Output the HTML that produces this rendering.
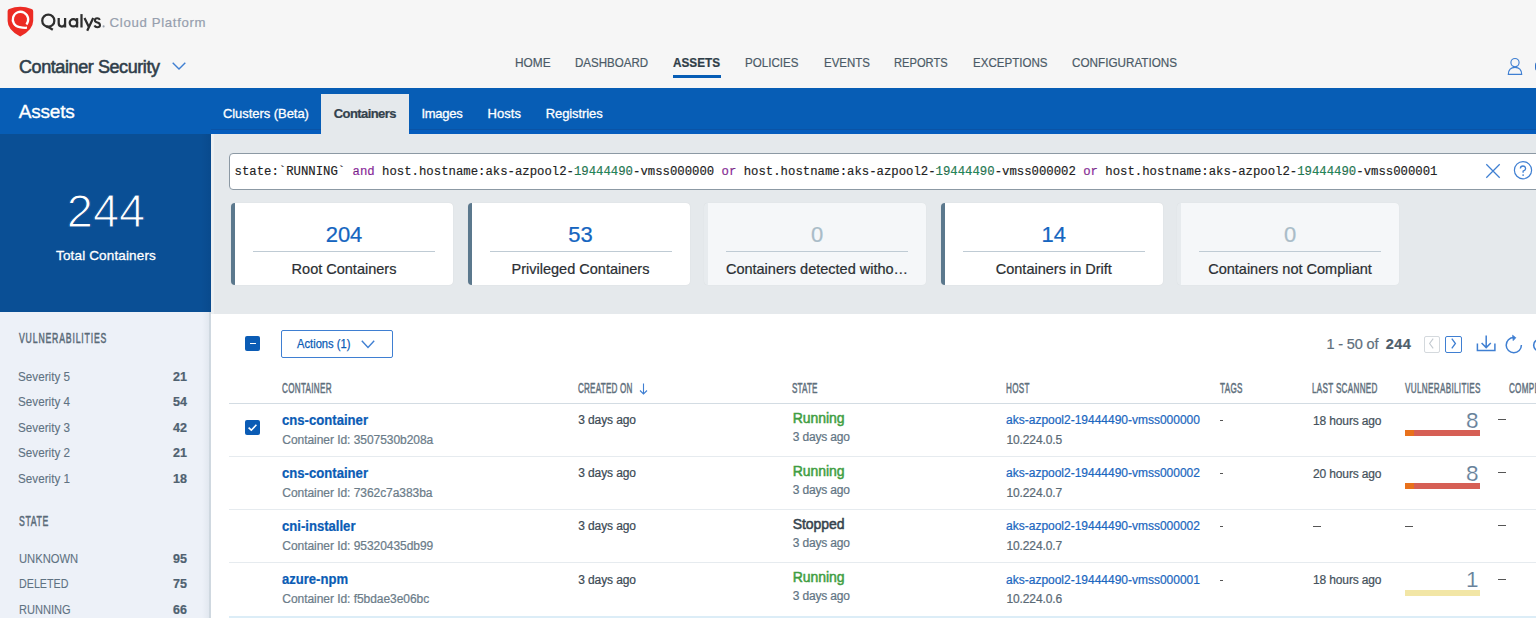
<!DOCTYPE html>
<html><head><meta charset="utf-8"><title>Qualys Container Security - Assets</title>
<style>
html,body{margin:0;padding:0;width:1536px;height:618px;overflow:hidden;background:#fff}
body{position:relative;font-family:"Liberation Sans",sans-serif}
.t{position:absolute;line-height:1;white-space:nowrap;-webkit-text-stroke-width:0.22px}
</style></head><body>
<div style="position:absolute;left:0px;top:0px;width:1536px;height:88px;background:#f6f6f6"></div>
<div style="position:absolute;left:0px;top:88px;width:1536px;height:46px;background:#075db5"></div>
<div style="position:absolute;left:211px;top:128.5px;width:1325px;height:1px;background:#0a53a6"></div>
<div style="position:absolute;left:211px;top:129.5px;width:1325px;height:4.5px;background:#055dbe"></div>
<div style="position:absolute;left:0px;top:134px;width:211px;height:178px;background:#0a4f95"></div>
<div style="position:absolute;left:211px;top:134px;width:1325px;height:180px;background:#e5e9ec"></div>
<div style="position:absolute;left:211px;top:134px;width:3px;height:180px;background:#edf0f2"></div>
<div style="position:absolute;left:201px;top:134px;width:10px;height:178px;background:linear-gradient(to right, rgba(0,30,70,0), rgba(0,30,70,0.10))"></div>
<div style="position:absolute;left:0px;top:311.7px;width:210.6px;height:307px;background:#edf1f8"></div>
<div style="position:absolute;left:202px;top:312px;width:7.5px;height:306px;background:linear-gradient(to right, rgba(160,175,190,0), rgba(160,175,190,0.16))"></div>
<div style="position:absolute;left:209px;top:312px;width:1.6px;height:306px;background:#cfd8e0"></div>
<div style="position:absolute;left:210.6px;top:313.5px;width:1326px;height:305px;background:#ffffff"></div>
<svg style="position:absolute;left:0;top:0" width="40" height="40" viewBox="0 0 40 40">
<path d="M7.6 11.2 Q7.6 9.6 9.2 9 Q20.2 4.4 31.6 9 Q33.2 9.6 33.2 11.2 L33.2 21 Q33 30 20.2 36.6 Q7.6 30 7.6 21 Z" fill="#ec2b24"/>
<path d="M26.4 24.4 A7.7 7.7 0 1 0 19.5 27.1 Q23.5 28 27 27.7" fill="none" stroke="#fff" stroke-width="2.3"/>
</svg>
<svg style="position:absolute;left:0;top:0" width="110" height="40" viewBox="0 0 110 40">
<g fill="none" stroke="#2e2e2e" stroke-width="2.25" stroke-linecap="butt">
<circle cx="48.3" cy="20.65" r="6.05"/>
<path d="M46.2 26.4 Q49.6 27.6 52.8 29.7"/>
<path d="M58.7 18.1 L58.7 23.3 Q58.7 26.5 61.9 26.5 Q65.1 26.5 65.1 23.3 M65.1 18.1 L65.1 27.5"/>
<circle cx="73.4" cy="22.8" r="3.7"/>
<path d="M77.1 18.1 L77.1 27.5"/>
<path d="M81.5 14.1 L81.5 27.5"/>
<path d="M84.5 18.1 L89 27.2 M93.2 18.1 L87.2 30.7"/>
<path d="M99.9 19.9 Q99.1 18.3 97.2 18.3 Q94.9 18.3 94.9 20.3 Q94.9 22 97.4 22.6 Q100 23.2 100 25.3 Q100 27.3 97.3 27.3 Q95.3 27.3 94.4 25.6" stroke-width="2.1"/>
</g>
<circle cx="103.6" cy="26.4" r="1.05" fill="#98a1ae"/>
</svg>
<div class="t" style="left:109.60px;top:16.03px;font-size:13.2px;color:#979fae;letter-spacing:0.669px;">Cloud Platform</div>
<div class="t" style="left:19.00px;top:57.56px;font-size:18px;color:#2f3e4a;letter-spacing:-0.416px;-webkit-text-stroke:0.55px #2f3e4a;">Container Security</div>
<svg style="position:absolute;left:172px;top:62px" width="14" height="8" viewBox="0 0 14 8"><path d="M0.7 0.7 L7 7 L13.3 0.7" fill="none" stroke="#3f7fd2" stroke-width="1.4"/></svg>
<div class="t" style="left:515.20px;top:56.62px;font-size:12.5px;color:#4b5a66;-webkit-text-stroke:0.2px #4b5a66;transform:scaleX(0.9493);transform-origin:0 0;">HOME</div>
<div class="t" style="left:575.20px;top:56.62px;font-size:12.5px;color:#4b5a66;-webkit-text-stroke:0.2px #4b5a66;transform:scaleX(0.9245);transform-origin:0 0;">DASHBOARD</div>
<div class="t" style="left:673.20px;top:56.62px;font-size:12.5px;color:#2f3d48;font-weight:bold;transform:scaleX(0.9398);transform-origin:0 0;">ASSETS</div>
<div class="t" style="left:745.00px;top:56.62px;font-size:12.5px;color:#4b5a66;-webkit-text-stroke:0.2px #4b5a66;transform:scaleX(0.9278);transform-origin:0 0;">POLICIES</div>
<div class="t" style="left:823.50px;top:56.62px;font-size:12.5px;color:#4b5a66;-webkit-text-stroke:0.2px #4b5a66;transform:scaleX(0.9178);transform-origin:0 0;">EVENTS</div>
<div class="t" style="left:894.00px;top:56.62px;font-size:12.5px;color:#4b5a66;-webkit-text-stroke:0.2px #4b5a66;transform:scaleX(0.8920);transform-origin:0 0;">REPORTS</div>
<div class="t" style="left:972.70px;top:56.62px;font-size:12.5px;color:#4b5a66;-webkit-text-stroke:0.2px #4b5a66;transform:scaleX(0.9246);transform-origin:0 0;">EXCEPTIONS</div>
<div class="t" style="left:1072.00px;top:56.62px;font-size:12.5px;color:#4b5a66;-webkit-text-stroke:0.2px #4b5a66;transform:scaleX(0.9361);transform-origin:0 0;">CONFIGURATIONS</div>
<div style="position:absolute;left:673px;top:74.5px;width:48px;height:3.5px;background:#075db5"></div>
<svg style="position:absolute;left:1506px;top:56px" width="18" height="20" viewBox="0 0 18 20"><circle cx="9" cy="6.6" r="4.1" fill="none" stroke="#3f7fd2" stroke-width="1.15"/><path d="M2.3 18.4 Q2.6 11.4 9 11.4 Q15.4 11.4 15.7 18.4 Z" fill="none" stroke="#3f7fd2" stroke-width="1.15"/></svg>
<div style="position:absolute;left:1535px;top:61.8px;width:10px;height:9px;background:#2f6fc4;border-radius:3px"></div>
<div class="t" style="left:18.75px;top:101.62px;font-size:19px;color:#ffffff;letter-spacing:-0.204px;-webkit-text-stroke:0.35px #ffffff;">Assets</div>
<div style="position:absolute;left:321px;top:93.5px;width:88px;height:41px;background:#e5e9ec"></div>
<div class="t" style="left:222.90px;top:106.60px;font-size:13px;color:#ffffff;letter-spacing:-0.049px;-webkit-text-stroke:0.3px #ffffff;">Clusters (Beta)</div>
<div class="t" style="left:333.80px;top:106.60px;font-size:13px;color:#33414c;font-weight:bold;letter-spacing:-0.589px;">Containers</div>
<div class="t" style="left:421.40px;top:106.60px;font-size:13px;color:#ffffff;letter-spacing:-0.246px;-webkit-text-stroke:0.3px #ffffff;">Images</div>
<div class="t" style="left:487.60px;top:106.60px;font-size:13px;color:#ffffff;letter-spacing:0.017px;-webkit-text-stroke:0.3px #ffffff;">Hosts</div>
<div class="t" style="left:545.70px;top:106.60px;font-size:13px;color:#ffffff;letter-spacing:-0.089px;-webkit-text-stroke:0.3px #ffffff;">Registries</div>
<div class="t" style="left:-194.00px;width:600px;text-align:center;top:187.21px;font-size:47px;color:#ffffff;-webkit-text-stroke:1.1px #0a4f95">244</div>
<div class="t" style="left:-194.00px;width:600px;text-align:center;top:248.67px;font-size:13.5px;color:#ffffff;letter-spacing:0.150px;-webkit-text-stroke:0.3px #ffffff;">Total Containers</div>
<div style="position:absolute;left:229px;top:152.5px;width:1320px;height:37px;background:#fff;border:1px solid #8c99a4;border-radius:4px;box-sizing:border-box"></div>
<div class="t" style="left:234.50px;top:166.47px;font-size:12.3px;color:#222;font-family:'Liberation Mono',monospace;-webkit-text-stroke:0.15px #222;">state:`RUNNING` <span style="color:#9c27b0">and</span> host.hostname:aks-azpool2-<span style="color:#1d8a5a">19444490</span>-vmss000000 <span style="color:#9c27b0">or</span> host.hostname:aks-azpool2-<span style="color:#1d8a5a">19444490</span>-vmss000002 <span style="color:#9c27b0">or</span> host.hostname:aks-azpool2-<span style="color:#1d8a5a">19444490</span>-vmss000001</div>
<svg style="position:absolute;left:1485px;top:163px" width="16" height="16" viewBox="0 0 16 16"><path d="M1.3 1.3 L14.7 14.7 M14.7 1.3 L1.3 14.7" stroke="#3f7fd2" stroke-width="1.25"/></svg>
<svg style="position:absolute;left:1513px;top:160px" width="20" height="20" viewBox="0 0 20 20"><circle cx="10" cy="10.2" r="8.6" fill="none" stroke="#3f7fd2" stroke-width="1.2"/><path d="M7.4 8.6 Q7.4 6 10 6 Q12.6 6 12.6 8.4 Q12.6 10 10.1 11.2 L10.1 12.8" fill="none" stroke="#3f7fd2" stroke-width="1.3"/><circle cx="10.1" cy="15.1" r="0.85" fill="#3f7fd2"/></svg>
<div style="position:absolute;left:231px;top:203px;width:222px;height:81.5px;background:#fff;border-radius:4px;border-left:4px solid #5b788d;box-sizing:border-box;box-shadow:0 0 1px rgba(0,0,0,0.12)"></div>
<div class="t" style="left:44.00px;width:600px;text-align:center;top:223.58px;font-size:22px;color:#1565c0;">204</div>
<div style="position:absolute;left:253px;top:251px;width:182px;height:1px;background:#bfcbd4"></div>
<div class="t" style="left:44.00px;width:600px;text-align:center;top:261.93px;font-size:14.5px;color:#2b2f33;">Root Containers</div>
<div style="position:absolute;left:467.5px;top:203px;width:222px;height:81.5px;background:#fff;border-radius:4px;border-left:4px solid #5b788d;box-sizing:border-box;box-shadow:0 0 1px rgba(0,0,0,0.12)"></div>
<div class="t" style="left:280.50px;width:600px;text-align:center;top:223.58px;font-size:22px;color:#1565c0;">53</div>
<div style="position:absolute;left:489.5px;top:251px;width:182px;height:1px;background:#bfcbd4"></div>
<div class="t" style="left:280.50px;width:600px;text-align:center;top:261.93px;font-size:14.5px;color:#2b2f33;">Privileged Containers</div>
<div style="position:absolute;left:704px;top:203px;width:222px;height:81.5px;background:#f5f7f9;border-radius:4px;border-left:4px solid #e7ebee;box-sizing:border-box;box-shadow:0 0 1px rgba(0,0,0,0.08)"></div>
<div class="t" style="left:517.00px;width:600px;text-align:center;top:223.58px;font-size:22px;color:#a9bcc8;">0</div>
<div style="position:absolute;left:726px;top:251px;width:182px;height:1px;background:#bfcbd4"></div>
<div class="t" style="left:517.00px;width:600px;text-align:center;top:261.93px;font-size:14.5px;color:#2b2f33;">Containers detected witho…</div>
<div style="position:absolute;left:940.8px;top:203px;width:222px;height:81.5px;background:#fff;border-radius:4px;border-left:4px solid #5b788d;box-sizing:border-box;box-shadow:0 0 1px rgba(0,0,0,0.12)"></div>
<div class="t" style="left:753.80px;width:600px;text-align:center;top:223.58px;font-size:22px;color:#1565c0;">14</div>
<div style="position:absolute;left:962.8px;top:251px;width:182px;height:1px;background:#bfcbd4"></div>
<div class="t" style="left:753.80px;width:600px;text-align:center;top:261.93px;font-size:14.5px;color:#2b2f33;">Containers in Drift</div>
<div style="position:absolute;left:1177px;top:203px;width:222px;height:81.5px;background:#f5f7f9;border-radius:4px;border-left:4px solid #e7ebee;box-sizing:border-box;box-shadow:0 0 1px rgba(0,0,0,0.08)"></div>
<div class="t" style="left:990.00px;width:600px;text-align:center;top:223.58px;font-size:22px;color:#a9bcc8;">0</div>
<div style="position:absolute;left:1199px;top:251px;width:182px;height:1px;background:#bfcbd4"></div>
<div class="t" style="left:990.00px;width:600px;text-align:center;top:261.93px;font-size:14.5px;color:#2b2f33;">Containers not Compliant</div>
<div style="position:absolute;left:245px;top:336px;width:15px;height:15px;background:#0b5cb5;border-radius:2px"></div>
<div style="position:absolute;left:249.5px;top:342.6px;width:6.5px;height:1.8px;background:#fff"></div>
<div style="position:absolute;left:281px;top:330px;width:112px;height:28px;border:1.3px solid #3f7fd2;border-radius:2px;box-sizing:border-box"></div>
<div class="t" style="left:297.00px;top:337.84px;font-size:12px;color:#0b5cb5;-webkit-text-stroke:0.25px #0b5cb5;transform:scaleX(0.9311);transform-origin:0 0;">Actions (1)</div>
<svg style="position:absolute;left:361px;top:340px" width="14" height="9" viewBox="0 0 14 9"><path d="M0.8 0.8 L7 7.5 L13.2 0.8" fill="none" stroke="#3f7fd2" stroke-width="1.4"/></svg>
<div class="t" style="left:1326.50px;top:337.33px;font-size:14.5px;color:#5f6f7c;letter-spacing:-0.150px;">1 - 50 of</div>
<div class="t" style="left:1385.80px;top:337.33px;font-size:14.5px;color:#4e5e6b;font-weight:bold;letter-spacing:0.403px;">244</div>
<div style="position:absolute;left:1423.5px;top:335.5px;width:16.5px;height:17px;border:1px solid #d4d9dd;border-radius:2px;box-sizing:border-box"></div>
<svg style="position:absolute;left:1423px;top:335px" width="17" height="17" viewBox="0 0 17 17"><path d="M10.2 3.6 L6.6 8.5 L10.2 13.4" fill="none" stroke="#c3cad0" stroke-width="1.1"/></svg>
<div style="position:absolute;left:1445px;top:335.5px;width:17px;height:17px;border:1.3px solid #3f7fd2;border-radius:2px;box-sizing:border-box"></div>
<svg style="position:absolute;left:1445px;top:335px" width="17" height="17" viewBox="0 0 17 17"><path d="M6.8 3.6 L10.4 8.5 L6.8 13.4" fill="none" stroke="#3f7fd2" stroke-width="1.3"/></svg>
<svg style="position:absolute;left:1470px;top:330px" width="66" height="30" viewBox="0 0 66 30"><path d="M7.4 13.5 L7.4 20.6 L24.9 20.6 L24.9 13.5" fill="none" stroke="#3f7fd2" stroke-width="1.5"/><path d="M16.2 5.5 L16.2 17.6 M11.6 13 L16.2 17.6 L20.8 13" fill="none" stroke="#3f7fd2" stroke-width="1.5"/><path d="M43.8 7.5 A7.6 7.6 0 1 0 51.4 15" fill="none" stroke="#3f7fd2" stroke-width="1.5"/><path d="M42.6 5.3 L45.8 7.7 L43.2 10.6 Z" fill="#3f7fd2" stroke="#3f7fd2" stroke-width="0.8"/><path d="M66 10.5 A6 6 0 0 0 66 20" fill="none" stroke="#3f7fd2" stroke-width="1.6"/></svg>
<div class="t" style="left:282.30px;top:380.95px;font-size:14px;color:#5f707d;letter-spacing:0.492px;-webkit-text-stroke:0.5px #5f707d;transform:scaleX(0.5800);transform-origin:0 0;">CONTAINER</div>
<div class="t" style="left:577.90px;top:380.95px;font-size:14px;color:#5f707d;letter-spacing:0.338px;-webkit-text-stroke:0.5px #5f707d;transform:scaleX(0.5800);transform-origin:0 0;">CREATED ON</div>
<svg style="position:absolute;left:639px;top:383px" width="9" height="12" viewBox="0 0 9 12"><path d="M4.5 0.5 L4.5 11 M1 7.5 L4.5 11 L8 7.5" fill="none" stroke="#3f7fd2" stroke-width="1.1"/></svg>
<div class="t" style="left:791.80px;top:380.95px;font-size:14px;color:#5f707d;letter-spacing:0.188px;-webkit-text-stroke:0.5px #5f707d;transform:scaleX(0.5800);transform-origin:0 0;">STATE</div>
<div class="t" style="left:1006.00px;top:380.95px;font-size:14px;color:#5f707d;letter-spacing:0.485px;-webkit-text-stroke:0.5px #5f707d;transform:scaleX(0.5800);transform-origin:0 0;">HOST</div>
<div class="t" style="left:1219.70px;top:380.95px;font-size:14px;color:#5f707d;letter-spacing:0.571px;-webkit-text-stroke:0.5px #5f707d;transform:scaleX(0.5800);transform-origin:0 0;">TAGS</div>
<div class="t" style="left:1312.20px;top:380.95px;font-size:14px;color:#5f707d;letter-spacing:0.514px;-webkit-text-stroke:0.5px #5f707d;transform:scaleX(0.5800);transform-origin:0 0;">LAST SCANNED</div>
<div class="t" style="left:1405.20px;top:380.95px;font-size:14px;color:#5f707d;letter-spacing:0.573px;-webkit-text-stroke:0.5px #5f707d;transform:scaleX(0.5800);transform-origin:0 0;">VULNERABILITIES</div>
<div class="t" style="left:1508.50px;top:380.95px;font-size:14px;color:#5f707d;letter-spacing:0.442px;-webkit-text-stroke:0.5px #5f707d;transform:scaleX(0.5800);transform-origin:0 0;">COMPLIANCE</div>
<div style="position:absolute;left:229px;top:402.5px;width:1307px;height:1.3px;background:#d3dce3"></div>
<div style="position:absolute;left:245px;top:420px;width:15px;height:15px;background:#0b5cb5;border-radius:2px"></div>
<svg style="position:absolute;left:245px;top:420px" width="15" height="15" viewBox="0 0 15 15"><path d="M3.6 7.6 L6.3 10.2 L11.4 4.8" fill="none" stroke="#fff" stroke-width="1.6"/></svg>
<div class="t" style="left:282.30px;top:412.55px;font-size:14px;color:#0b5cb5;font-weight:bold;transform:scaleX(0.9368);transform-origin:0 0;">cns-container</div>
<div class="t" style="left:282.30px;top:433.54px;font-size:12px;color:#6b7c89;letter-spacing:-0.05px">Container Id: 3507530b208a</div>
<div class="t" style="left:578.20px;top:413.94px;font-size:12px;color:#3c4a55;letter-spacing:-0.1px">3 days ago</div>
<div class="t" style="left:792.70px;top:410.85px;font-size:14px;color:#3f9e42;-webkit-text-stroke:0.5px #3f9e42;letter-spacing:-0.05px">Running</div>
<div class="t" style="left:792.70px;top:430.64px;font-size:12px;color:#627584;letter-spacing:-0.15px">3 days ago</div>
<div class="t" style="left:1006.10px;top:414.04px;font-size:12px;color:#1c67c0;letter-spacing:-0.01px">aks-azpool2-19444490-vmss000000</div>
<div class="t" style="left:1006.40px;top:433.84px;font-size:12px;color:#5a6a76;letter-spacing:-0.1px">10.224.0.5</div>
<div style="position:absolute;left:1220px;top:420px;width:3px;height:1px;background:#555"></div>
<div class="t" style="left:1313.10px;top:414.54px;font-size:12px;color:#45525c;letter-spacing:-0.15px">18 hours ago</div>
<div class="t" style="left:1178.50px;width:300px;text-align:right;top:409.55px;font-size:22.5px;color:#66819a;-webkit-text-stroke:0.15px #fff">8</div>
<div style="position:absolute;left:1405px;top:430px;width:75px;height:6px;background:#d65f55"></div>
<div style="position:absolute;left:1405px;top:430px;width:9px;height:6px;background:#e8711c"></div>
<div style="position:absolute;left:1498px;top:419px;width:8px;height:1px;background:#555"></div>
<div style="position:absolute;left:229px;top:456px;width:1307px;height:1px;background:#e6ebef"></div>
<div class="t" style="left:282.30px;top:465.75px;font-size:14px;color:#0b5cb5;font-weight:bold;transform:scaleX(0.9368);transform-origin:0 0;">cns-container</div>
<div class="t" style="left:282.30px;top:486.74px;font-size:12px;color:#6b7c89;letter-spacing:-0.05px">Container Id: 7362c7a383ba</div>
<div class="t" style="left:578.20px;top:467.14px;font-size:12px;color:#3c4a55;letter-spacing:-0.1px">3 days ago</div>
<div class="t" style="left:792.70px;top:464.05px;font-size:14px;color:#3f9e42;-webkit-text-stroke:0.5px #3f9e42;letter-spacing:-0.05px">Running</div>
<div class="t" style="left:792.70px;top:483.84px;font-size:12px;color:#627584;letter-spacing:-0.15px">3 days ago</div>
<div class="t" style="left:1006.10px;top:467.24px;font-size:12px;color:#1c67c0;letter-spacing:-0.01px">aks-azpool2-19444490-vmss000002</div>
<div class="t" style="left:1006.40px;top:487.04px;font-size:12px;color:#5a6a76;letter-spacing:-0.1px">10.224.0.7</div>
<div style="position:absolute;left:1220px;top:473px;width:3px;height:1px;background:#555"></div>
<div class="t" style="left:1313.10px;top:467.74px;font-size:12px;color:#45525c;letter-spacing:-0.15px">20 hours ago</div>
<div class="t" style="left:1178.50px;width:300px;text-align:right;top:462.75px;font-size:22.5px;color:#66819a;-webkit-text-stroke:0.15px #fff">8</div>
<div style="position:absolute;left:1405px;top:483px;width:75px;height:6px;background:#d65f55"></div>
<div style="position:absolute;left:1405px;top:483px;width:9px;height:6px;background:#e8711c"></div>
<div style="position:absolute;left:1498px;top:472px;width:8px;height:1px;background:#555"></div>
<div style="position:absolute;left:229px;top:509px;width:1307px;height:1px;background:#e6ebef"></div>
<div class="t" style="left:282.30px;top:518.95px;font-size:14px;color:#0b5cb5;font-weight:bold;transform:scaleX(0.9353);transform-origin:0 0;">cni-installer</div>
<div class="t" style="left:282.30px;top:539.94px;font-size:12px;color:#6b7c89;letter-spacing:-0.05px">Container Id: 95320435db99</div>
<div class="t" style="left:578.20px;top:520.34px;font-size:12px;color:#3c4a55;letter-spacing:-0.1px">3 days ago</div>
<div class="t" style="left:792.70px;top:517.25px;font-size:14px;color:#36434d;-webkit-text-stroke:0.5px #36434d;letter-spacing:-0.05px">Stopped</div>
<div class="t" style="left:792.70px;top:537.04px;font-size:12px;color:#627584;letter-spacing:-0.15px">3 days ago</div>
<div class="t" style="left:1006.10px;top:520.44px;font-size:12px;color:#1c67c0;letter-spacing:-0.01px">aks-azpool2-19444490-vmss000002</div>
<div class="t" style="left:1006.40px;top:540.24px;font-size:12px;color:#5a6a76;letter-spacing:-0.1px">10.224.0.7</div>
<div style="position:absolute;left:1220px;top:526px;width:3px;height:1px;background:#555"></div>
<div style="position:absolute;left:1313px;top:526px;width:8px;height:1px;background:#555"></div>
<div style="position:absolute;left:1405px;top:526px;width:8px;height:1px;background:#555"></div>
<div style="position:absolute;left:1498px;top:525px;width:8px;height:1px;background:#555"></div>
<div style="position:absolute;left:229px;top:562px;width:1307px;height:1px;background:#e6ebef"></div>
<div class="t" style="left:282.30px;top:572.15px;font-size:14px;color:#0b5cb5;font-weight:bold;transform:scaleX(0.9324);transform-origin:0 0;">azure-npm</div>
<div class="t" style="left:282.30px;top:593.14px;font-size:12px;color:#6b7c89;letter-spacing:-0.05px">Container Id: f5bdae3e06bc</div>
<div class="t" style="left:578.20px;top:573.54px;font-size:12px;color:#3c4a55;letter-spacing:-0.1px">3 days ago</div>
<div class="t" style="left:792.70px;top:570.45px;font-size:14px;color:#3f9e42;-webkit-text-stroke:0.5px #3f9e42;letter-spacing:-0.05px">Running</div>
<div class="t" style="left:792.70px;top:590.24px;font-size:12px;color:#627584;letter-spacing:-0.15px">3 days ago</div>
<div class="t" style="left:1006.10px;top:573.64px;font-size:12px;color:#1c67c0;letter-spacing:-0.01px">aks-azpool2-19444490-vmss000001</div>
<div class="t" style="left:1006.40px;top:593.44px;font-size:12px;color:#5a6a76;letter-spacing:-0.1px">10.224.0.6</div>
<div style="position:absolute;left:1220px;top:580px;width:3px;height:1px;background:#555"></div>
<div class="t" style="left:1313.10px;top:574.14px;font-size:12px;color:#45525c;letter-spacing:-0.15px">18 hours ago</div>
<div class="t" style="left:1178.50px;width:300px;text-align:right;top:569.15px;font-size:22.5px;color:#66819a;-webkit-text-stroke:0.15px #fff">1</div>
<div style="position:absolute;left:1405px;top:590px;width:75px;height:6px;background:#f2e6a6"></div>
<div style="position:absolute;left:1498px;top:579px;width:8px;height:1px;background:#555"></div>
<div style="position:absolute;left:229px;top:616px;width:1307px;height:1px;background:#e6ebef"></div>
<div style="position:absolute;left:229px;top:615.5px;width:1307px;height:2.5px;background:#dcedf7"></div>
<div class="t" style="left:18.60px;top:330.20px;font-size:15px;color:#5a6b78;letter-spacing:1.415px;-webkit-text-stroke:0.55px #5a6b78;transform:scaleX(0.5800);transform-origin:0 0;">VULNERABILITIES</div>
<div class="t" style="left:18.40px;top:370.92px;font-size:12.5px;color:#5f7282;-webkit-text-stroke:0.1px #5f7282;transform:scaleX(0.9356);transform-origin:0 0;">Severity 5</div>
<div class="t" style="left:-113.00px;width:300px;text-align:right;top:370.92px;font-size:12.5px;color:#4f6170;font-weight:bold;">21</div>
<div class="t" style="left:18.40px;top:396.32px;font-size:12.5px;color:#5f7282;-webkit-text-stroke:0.1px #5f7282;transform:scaleX(0.9356);transform-origin:0 0;">Severity 4</div>
<div class="t" style="left:-113.00px;width:300px;text-align:right;top:396.32px;font-size:12.5px;color:#4f6170;font-weight:bold;">54</div>
<div class="t" style="left:18.40px;top:421.72px;font-size:12.5px;color:#5f7282;-webkit-text-stroke:0.1px #5f7282;transform:scaleX(0.9356);transform-origin:0 0;">Severity 3</div>
<div class="t" style="left:-113.00px;width:300px;text-align:right;top:421.72px;font-size:12.5px;color:#4f6170;font-weight:bold;">42</div>
<div class="t" style="left:18.40px;top:447.12px;font-size:12.5px;color:#5f7282;-webkit-text-stroke:0.1px #5f7282;transform:scaleX(0.9356);transform-origin:0 0;">Severity 2</div>
<div class="t" style="left:-113.00px;width:300px;text-align:right;top:447.12px;font-size:12.5px;color:#4f6170;font-weight:bold;">21</div>
<div class="t" style="left:18.40px;top:472.52px;font-size:12.5px;color:#5f7282;-webkit-text-stroke:0.1px #5f7282;transform:scaleX(0.9356);transform-origin:0 0;">Severity 1</div>
<div class="t" style="left:-113.00px;width:300px;text-align:right;top:472.52px;font-size:12.5px;color:#4f6170;font-weight:bold;">18</div>
<div class="t" style="left:18.80px;top:512.90px;font-size:15px;color:#5a6b78;letter-spacing:1.058px;-webkit-text-stroke:0.55px #5a6b78;transform:scaleX(0.5800);transform-origin:0 0;">STATE</div>
<div class="t" style="left:18.80px;top:552.92px;font-size:12.5px;color:#5f7282;-webkit-text-stroke:0.1px #5f7282;transform:scaleX(0.8974);transform-origin:0 0;">UNKNOWN</div>
<div class="t" style="left:-113.00px;width:300px;text-align:right;top:552.92px;font-size:12.5px;color:#4f6170;font-weight:bold;">95</div>
<div class="t" style="left:18.80px;top:578.32px;font-size:12.5px;color:#5f7282;-webkit-text-stroke:0.1px #5f7282;transform:scaleX(0.8568);transform-origin:0 0;">DELETED</div>
<div class="t" style="left:-113.00px;width:300px;text-align:right;top:578.32px;font-size:12.5px;color:#4f6170;font-weight:bold;">75</div>
<div class="t" style="left:18.80px;top:603.72px;font-size:12.5px;color:#5f7282;-webkit-text-stroke:0.1px #5f7282;transform:scaleX(0.8846);transform-origin:0 0;">RUNNING</div>
<div class="t" style="left:-113.00px;width:300px;text-align:right;top:603.72px;font-size:12.5px;color:#4f6170;font-weight:bold;">66</div>
</body></html>
